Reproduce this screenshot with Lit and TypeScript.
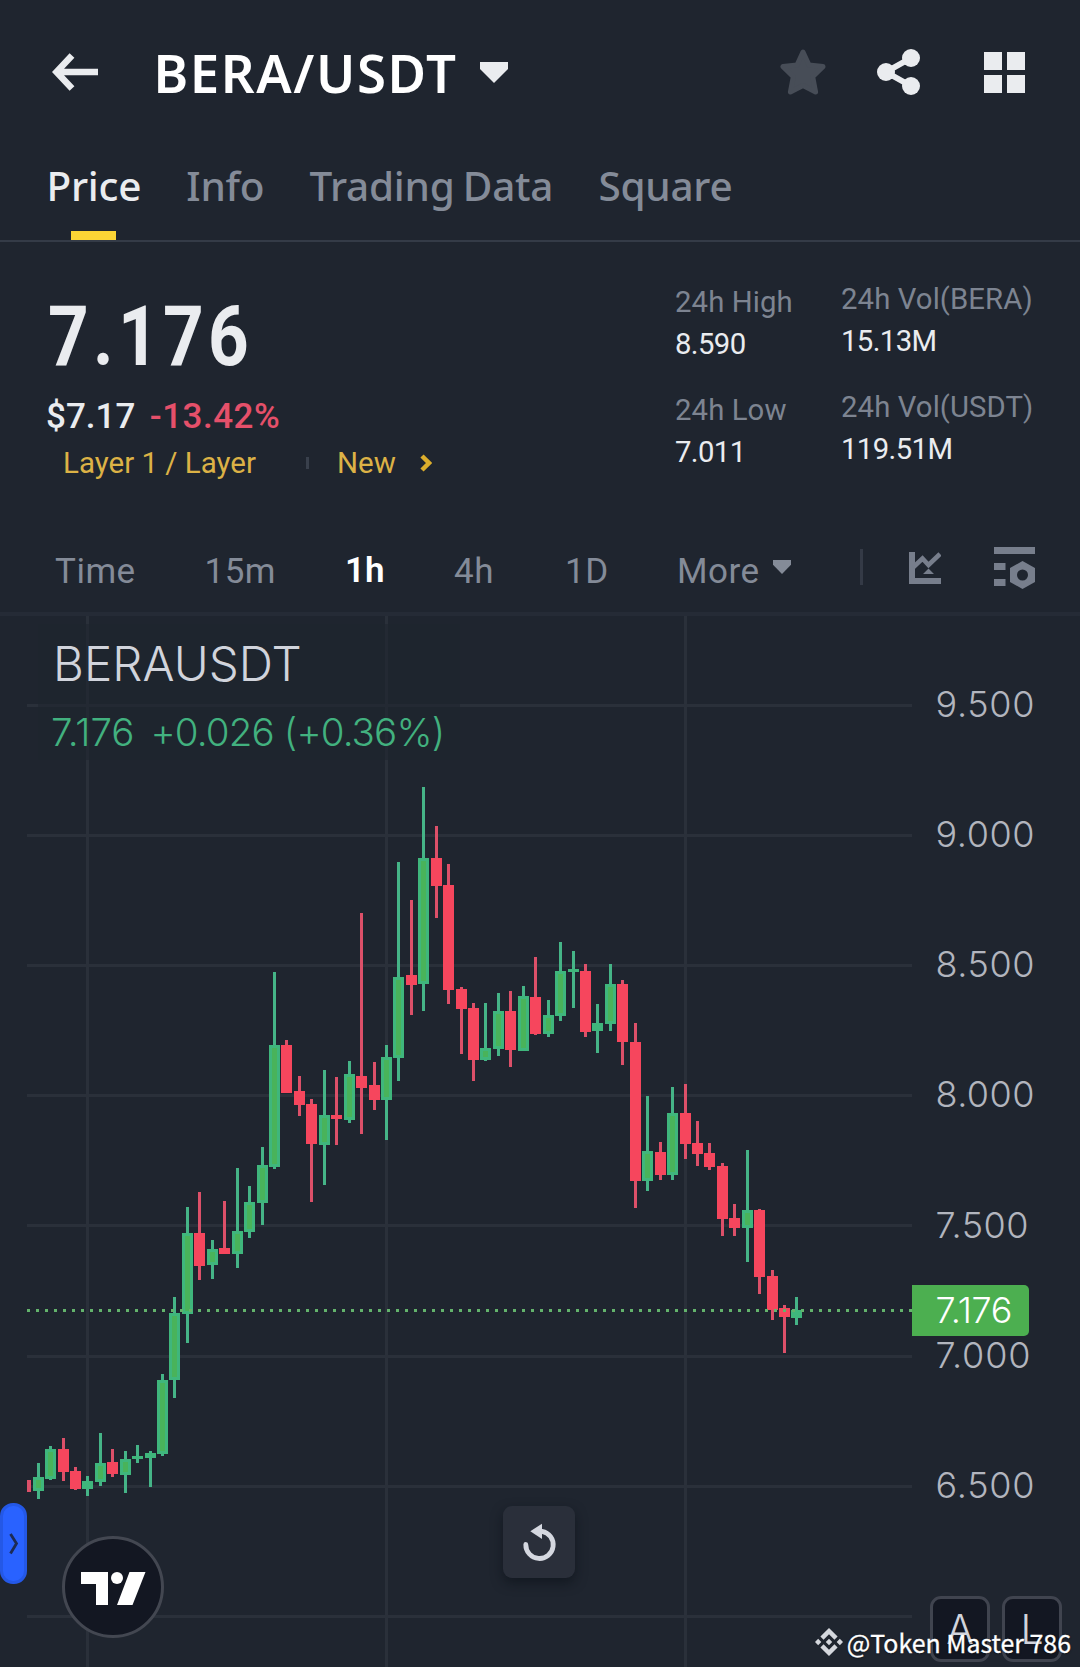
import { LitElement, html, svg, css } from "lit";
import { customElement, state } from "lit/decorators.js";
import { classMap } from "lit/directives/class-map.js";

type Side = "g" | "r";
/** x of the body, wick top, body top, body bottom, wick bottom, direction */
type Candle = [number, number, number, number, number, Side];

const CANDLES: Candle[] = [
  [33, 1463, 1477, 1491, 1499, "g"], [45, 1446, 1449, 1479, 1480, "g"],
  [58, 1438, 1449, 1472, 1481, "r"], [70, 1467, 1471, 1489, 1490, "r"],
  [82, 1476, 1481, 1489, 1496, "g"], [95, 1433, 1463, 1482, 1486, "g"],
  [107, 1449, 1462, 1474, 1477, "r"], [120, 1451, 1459, 1475, 1493, "g"],
  [132, 1445, 1456, 1459, 1463, "g"], [145, 1451, 1453, 1458, 1487, "g"],
  [157, 1374, 1380, 1454, 1456, "g"], [169, 1297, 1313, 1380, 1398, "g"],
  [182, 1207, 1233, 1314, 1343, "g"], [194, 1192, 1233, 1266, 1280, "r"],
  [207, 1240, 1249, 1265, 1279, "g"], [219, 1201, 1248, 1254, 1254, "r"],
  [232, 1168, 1231, 1254, 1268, "g"], [244, 1186, 1202, 1232, 1238, "g"],
  [257, 1147, 1165, 1203, 1225, "g"], [269, 972, 1045, 1167, 1169, "g"],
  [281, 1040, 1045, 1093, 1093, "r"], [294, 1076, 1091, 1105, 1116, "r"],
  [306, 1099, 1104, 1144, 1202, "r"], [319, 1070, 1115, 1145, 1185, "g"],
  [331, 1077, 1115, 1119, 1145, "r"], [344, 1061, 1074, 1120, 1123, "g"],
  [356, 913, 1076, 1088, 1134, "r"], [369, 1062, 1085, 1100, 1110, "r"],
  [381, 1045, 1057, 1100, 1140, "g"], [393, 862, 977, 1058, 1081, "g"],
  [406, 900, 975, 985, 1015, "r"], [418, 787, 858, 984, 1011, "g"],
  [431, 826, 858, 886, 918, "r"], [443, 864, 885, 990, 1004, "r"],
  [456, 987, 989, 1009, 1054, "r"], [468, 1003, 1008, 1060, 1081, "r"],
  [480, 1003, 1048, 1060, 1061, "g"], [493, 993, 1011, 1049, 1056, "g"],
  [505, 991, 1011, 1050, 1067, "r"], [518, 986, 996, 1051, 1051, "g"],
  [530, 957, 997, 1034, 1035, "r"], [543, 1000, 1015, 1034, 1037, "g"],
  [555, 942, 971, 1016, 1021, "g"], [568, 951, 969, 972, 1008, "g"],
  [580, 964, 971, 1032, 1037, "r"], [592, 1004, 1023, 1031, 1053, "g"],
  [605, 964, 984, 1024, 1031, "g"], [617, 980, 984, 1042, 1065, "r"],
  [630, 1023, 1042, 1181, 1208, "r"], [642, 1096, 1151, 1181, 1191, "g"],
  [655, 1142, 1152, 1175, 1180, "r"], [667, 1087, 1113, 1175, 1180, "g"],
  [680, 1084, 1113, 1144, 1159, "r"], [692, 1121, 1143, 1154, 1166, "r"],
  [704, 1143, 1153, 1167, 1170, "r"], [717, 1163, 1166, 1219, 1236, "r"],
  [729, 1204, 1218, 1228, 1236, "r"], [742, 1150, 1210, 1228, 1262, "g"],
  [754, 1209, 1210, 1277, 1294, "r"], [767, 1270, 1276, 1310, 1320, "r"],
  [779, 1305, 1308, 1317, 1353, "r"], [791, 1297, 1310, 1318, 1325, "g"],
];

const LEVELS = [9.5, 9, 8.5, 8, 7.5, 7, 6.5, 6];
const COLUMNS = [87, 386, 685];
const LABEL_WIDTH: Record<string, number> = { "7.500": 93, "7.000": 95 };
const priceToY = (p: number) => 1486.3 - (p - 6.5) * 260.4;

@customElement("price-chart")
export class PriceChart extends LitElement {
  static styles = css`
    :host { display: block; position: relative; height: 1051px; border-top: 4px solid #252b36; overflow: hidden; font-family: Inter, "Liberation Sans", sans-serif; }
    .plot { display: block; }
    .grid { fill: #2a303a; }
    .axis { fill: #b2b5be; font-size: 36px; font-weight: 300; }
    .last { fill: #fff; font-size: 36px; font-weight: 300; }
    .wick-g { fill: #45b487; }
    .wick-r { fill: #dc5069; }
    .body-g { fill: #3fb67c; }
    .core-g { fill: #49b35a; }
    .body-r { fill: #f6465d; }
    .legend { position: absolute; left: 38px; top: 8px; width: 422px; height: 136px; box-sizing: border-box; padding: 5px 0 0 13px; background: rgba(31, 37, 47, 0.62); font-weight: 300; }
    .symbol { color: #d1d4dc; font-size: 47.5px; line-height: 70px; letter-spacing: 0.1px; padding-left: 2px; }
    .quote { display: flex; gap: 16px; margin-top: 3px; color: #42b17f; font-size: 38.5px; line-height: 60px; white-space: pre; }
    .change { letter-spacing: -0.85px; }
    .handle { position: absolute; left: 0; top: 887px; width: 27px; height: 81px; box-sizing: border-box; border: 3px solid #2458e6; border-radius: 13px; background: #2962ff; }
    .tv { position: absolute; left: 61.5px; top: 920px; }
    .reset { position: absolute; left: 503px; top: 890px; width: 72px; height: 72px; border-radius: 9px; background: #2a2f3a; box-shadow: 0 5px 12px rgba(10, 14, 22, 0.55); }
    .modes { position: absolute; left: 930px; top: 980px; display: flex; gap: 12px; }
    .mode { width: 60px; height: 66px; box-sizing: border-box; border: 3px solid #40444f; border-radius: 11px; background: #131722; color: #d1d4dc; font-size: 41px; font-weight: 300; line-height: 60px; text-align: center; }
    .credit { position: absolute; right: 9px; top: 1006.5px; display: flex; align-items: center; gap: 4px; height: 38px; color: #fff; font: 400 24.9px/38px "Noto Sans CJK SC", "Noto Sans", sans-serif; -webkit-text-stroke: 0.3px #fff; white-space: pre; text-shadow: 0 1px 2px rgba(0, 0, 0, 0.5); }
  `;

  private candle([x, wt, bt, bb, wb, s]: Candle) {
    const h = bb - bt;
    return svg`
      <rect class="wick-${s}" x=${x + 4} y=${wt} width="3" height=${wb - wt}></rect>
      <rect class="body-${s}" x=${x} y=${bt} width="11" height=${h}></rect>
      ${s === "g" && h > 9 ? svg`<rect class="core-g" x=${x + 3} y=${bt + 3} width="5" height=${h - 6}></rect>` : null}`;
  }

  render() {
    const last = 1310.5;
    return html`
      <svg class="plot" width="1080" height="1051" viewBox="0 616 1080 1051">
        ${COLUMNS.map((x) => svg`<rect class="grid" x=${x - 1} y="616" width="3" height="1051"></rect>`)}
        ${LEVELS.map((p) => svg`<rect class="grid" x="27" y=${Math.round(priceToY(p) - 1.5)} width="885" height="3"></rect>`)}
        <rect class="wick-r" x="27" y="1480" width="4" height="12"></rect>
        ${CANDLES.map((c) => this.candle(c))}
        <line x1="27" x2="912" y1=${last} y2=${last} stroke="#63b36c" stroke-width="3" stroke-dasharray="3 6"></line>
        ${LEVELS.slice(0, 7).map((p) => {
          const t = p.toFixed(3);
          return svg`<text class="axis" x="935.5" y=${priceToY(p) + 11.6} textLength=${LABEL_WIDTH[t] ?? 99}>${t}</text>`;
        })}
        <path d="M912 1285h112a5 5 0 0 1 5 5v41a5 5 0 0 1-5 5H912z" fill="#4caf50"></path>
        <text class="last" x="935.5" y="1323" textLength="77">7.176</text>
      </svg>
      <div class="legend">
        <div class="symbol">BERAUSDT</div>
        <div class="quote"><span>7.176</span><span class="change">+0.026 (+0.36%)</span></div>
      </div>
      <svg class="tv" width="102" height="102" viewBox="0 0 102 102">
        <circle cx="51" cy="51" r="49.5" fill="#131722" stroke="#434751" stroke-width="3"></circle>
        <path d="M19 36h27v33H34V48H19zM67.500 36H83.500L70.500 69H55z" fill="#fff"></path>
        <circle cx="55" cy="42" r="6" fill="#fff"></circle>
      </svg>
      <div class="handle">
        <svg width="21" height="75" viewBox="0 0 21 75"><path d="M7.500 28l6 9.500-6 10" fill="none" stroke="#1c2b55" stroke-width="2.800"></path></svg>
      </div>
      <div class="reset">
        <svg width="72" height="72" viewBox="0 0 72 72">
          <path d="M22.800 38.500A13.700 13.700 0 1 0 39 25.300" fill="none" stroke="#d5d8e0" stroke-width="4.800" stroke-linecap="round"></path>
          <path d="M27.300 25.300L39 17.700V33z" fill="#d5d8e0"></path>
        </svg>
      </div>
      <div class="modes"><div class="mode">A</div><div class="mode">L</div></div>
      <div class="credit">
        <svg width="28" height="28" viewBox="0 0 126.610 126.610" fill="#d4d7dd">
          <path d="M38.730 53.200l24.590-24.580 24.600 24.600 14.300-14.310L63.320 0 24.420 38.900zM0 63.310l14.300-14.310 14.310 14.310L14.300 77.610zM38.730 73.410l24.590 24.590 24.600-24.600 14.310 14.290L63.320 126.600 24.420 87.700zM98 63.310l14.300-14.310 14.310 14.300-14.310 14.320zM77.830 63.300L63.320 48.780 48.800 63.300 63.300 77.800z"></path>
        </svg>
        <span>@Token Master 786</span>
      </div>`;
  }
}

@customElement("app-root")
export class AppRoot extends LitElement {
  static styles = css`
    :host { display: block; width: 1080px; height: 1667px; overflow: hidden; background: #1f252f; color: #eaecef; font-family: Roboto, "Noto Sans", sans-serif; }
    svg { display: block; flex: none; }
    .header { display: flex; align-items: center; height: 145px; padding: 0 55px 0 52px; }
    .header svg { margin-bottom: 1px; }
    .pair { margin: 0 22px 0 55.5px; color: #fff; font: 600 52.7px/70px "Noto Sans", sans-serif; letter-spacing: 1.6px; }
    .actions { display: flex; align-items: center; margin-left: auto; }
    .actions .share { margin: 0 64px 1px 51px; }
    .tabs { display: flex; gap: 45.2px; height: 95px; padding-left: 46.5px; border-bottom: 2px solid #343b47; font: 500 40.5px/81px "Noto Sans", sans-serif; letter-spacing: -0.25px; word-spacing: -2px; color: #848b98; }
    .tab { display: flex; flex-direction: column; justify-content: space-between; align-items: center; }
    .tab.active { color: #eaecef; }
    .tab.active::after { content: ""; width: 45px; height: 9.5px; background: #fcd535; }
    .summary { display: flex; height: 288px; }
    .quote { padding: 50px 0 0 46px; }
    .price { width: 240px; font-size: 82.5px; font-weight: 700; line-height: 90px; letter-spacing: 5px; transform: translateX(2px) scaleX(0.86); transform-origin: 0 50%; }
    .fiat { display: flex; gap: 14.5px; margin-top: 13px; font-size: 35px; font-weight: 500; line-height: 44px; }
    .down { color: #e5506a; letter-spacing: 0.5px; }
    .tags { display: flex; align-items: center; margin-top: 2px; padding-left: 17px; font-size: 29.5px; line-height: 44px; color: #dcb246; }
    .sep { width: 2.5px; height: 12px; margin: 0 28px 0 50.5px; background: #39404c; }
    .tags svg { margin-left: 24px; }
    .stats { display: flex; margin-left: auto; width: 405px; }
    .col { width: 166px; padding-top: 39px; }
    .col + .col { width: auto; padding-top: 36px; }
    .stat { margin-bottom: 24px; font-size: 29.3px; line-height: 42px; white-space: nowrap; }
    .label { color: #7d8491; letter-spacing: 0.1px; }
    .value { font-weight: 450; letter-spacing: -0.6px; }
    .intervals { display: grid; grid-template-columns: 149.500px 139.500px 110px 111px 112px 183px 48.5px 85px auto; align-items: center; height: 82px; padding-left: 55px; font-size: 35px; line-height: 44px; color: #848b98; letter-spacing: 0.5px; }
    .interval { display: flex; align-items: center; gap: 13px; padding-top: 2px; }
    .interval.active { color: #fff; font-weight: 600; letter-spacing: 0; padding: 0 0 0 1px; }
    .interval svg { margin-bottom: 10px; }
    .bar { width: 3px; height: 36px; margin-bottom: 8px; background: #343a46; }
    .tool { margin-bottom: 7px; }
  `;

  @state() private tab = "Price";
  @state() private interval = "1h";

  private caret(w: number, h: number, fill: string) {
    return html`<svg width=${w} height=${h} viewBox="0 0 28 21" preserveAspectRatio="none"><path d="M0 0h28v7L14 21 0 7z" fill=${fill}></path></svg>`;
  }

  private stat(label: string, value: string) {
    return html`<div class="stat"><div class="label">${label}</div><div class="value">${value}</div></div>`;
  }

  render() {
    return html`
      <div class="header">
        <svg width="46" height="38" viewBox="0 0 46 38"><path d="M20 2.500L4.500 19 20 35.500M5 19h41" fill="none" stroke="#eaecef" stroke-width="6.600"></path></svg>
        <div class="pair">BERA/USDT</div>
        ${this.caret(28, 21, "#eaecef")}
        <div class="actions">
          <svg width="46" height="46" viewBox="0 0 46 46"><path d="M23 3l6 13 14 1.600-10.300 10.100 2.900 15.300L23 36.500 10.400 43l2.900-15.300L3 17.600 17 16z" fill="#474d57" stroke="#474d57" stroke-width="5" stroke-linejoin="round"></path></svg>
          <svg class="share" width="43" height="46" viewBox="0 0 43 46" fill="#eaecef"><path d="M34 9L9 23l25 14" fill="none" stroke="#eaecef" stroke-width="6"></path><circle cx="9" cy="23" r="9"></circle><circle cx="34" cy="9" r="9"></circle><circle cx="34" cy="37" r="9"></circle></svg>
          <svg width="41" height="41" viewBox="0 0 41 41" fill="#eaecef"><path d="M0 0h18v18H0zM23 0h18v18H23zM0 23h18v18H0zM23 23h18v18H23z"></path></svg>
        </div>
      </div>
      <div class="tabs">
        ${["Price", "Info", "Trading Data", "Square"].map((t) => html`<div class=${classMap({ tab: true, active: t === this.tab })} @click=${() => (this.tab = t)}>${t}</div>`)}
      </div>
      <div class="summary">
        <div class="quote">
          <div class="price">7.176</div>
          <div class="fiat"><span>$7.17</span><span class="down">-13.42%</span></div>
          <div class="tags">
            <span>Layer 1 / Layer</span><span class="sep"></span><span>New</span>
            <svg width="12" height="18" viewBox="0 0 12 18"><path d="M2 2l7 7-7 7" fill="none" stroke="#dcae2c" stroke-width="4.500"></path></svg>
          </div>
        </div>
        <div class="stats">
          <div class="col">${this.stat("24h High", "8.590")}${this.stat("24h Low", "7.011")}</div>
          <div class="col">${this.stat("24h Vol(BERA)", "15.13M")}${this.stat("24h Vol(USDT)", "119.51M")}</div>
        </div>
      </div>
      <div class="intervals">
        ${["Time", "15m", "1h", "4h", "1D"].map((t) => html`<div class=${classMap({ interval: true, active: t === this.interval })} @click=${() => (this.interval = t)}>${t}</div>`)}
        <div class="interval">More ${this.caret(18, 14, "#848b98")}</div>
        <div class="bar"></div>
        <svg class="tool" width="32" height="32" viewBox="0 0 32 32"><path d="M0 0h6v26h26v6H0zM19.500 16.500l5.500 5.500H14z" fill="#777e8c"></path><path d="M4 15.500L13.500 6.500l6 6.500L31 2" fill="none" stroke="#777e8c" stroke-width="4.600"></path></svg>
        <svg class="tool" width="42" height="42" viewBox="0 0 42 42" fill="#777e8c"><path d="M0 0h41v7H0zM0 16h11.500v7H0zM0 32h11.500v7H0z"></path><path fill-rule="evenodd" d="M28.500 14L41 21v14l-12.500 7L16 35V21zM28.500 22.500a5.500 5.500 0 1 0 0 11a5.500 5.500 0 0 0 0-11z"></path></svg>
      </div>
      <price-chart></price-chart>`;
  }
}
